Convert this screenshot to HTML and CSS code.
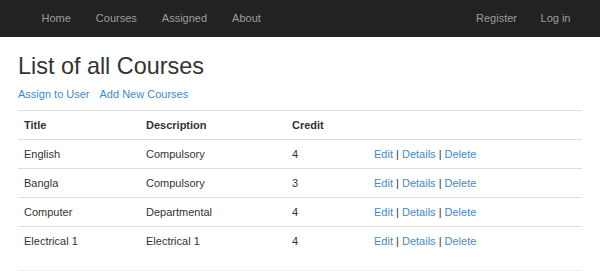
FILE: index.html
```html
<!DOCTYPE html>
<html>
<head>
<meta charset="utf-8">
<title>Courses</title>
<link rel="stylesheet" href="styles.css">
</head>
<body>
<nav class="navbar">
  <ul class="nav nav-left">
    <li><a href="#">Home</a></li>
    <li><a href="#">Courses</a></li>
    <li><a href="#">Assigned</a></li>
    <li><a href="#">About</a></li>
  </ul>
  <ul class="nav nav-right">
    <li><a href="#">Register</a></li>
    <li><a href="#">Log in</a></li>
  </ul>
</nav>
<main class="container">
  <h2 class="title">List of all Courses</h2>
  <p class="actions">
    <a href="#">Assign to User</a>
    <a href="#">Add New Courses</a>
  </p>
  <table class="table">
    <tr>
      <th class="c1">Title</th>
      <th class="c2">Description</th>
      <th class="c3">Credit</th>
      <th></th>
    </tr>
    <tr>
      <td>English</td><td>Compulsory</td><td>4</td>
      <td><a href="#">Edit</a> | <a href="#">Details</a> | <a href="#">Delete</a></td>
    </tr>
    <tr>
      <td>Bangla</td><td>Compulsory</td><td>3</td>
      <td><a href="#">Edit</a> | <a href="#">Details</a> | <a href="#">Delete</a></td>
    </tr>
    <tr>
      <td>Computer</td><td>Departmental</td><td>4</td>
      <td><a href="#">Edit</a> | <a href="#">Details</a> | <a href="#">Delete</a></td>
    </tr>
    <tr>
      <td>Electrical 1</td><td>Electrical 1</td><td>4</td>
      <td><a href="#">Edit</a> | <a href="#">Details</a> | <a href="#">Delete</a></td>
    </tr>
  </table>
  <hr class="rule">
</main>
</body>
</html>
```
FILE: styles.css
```css
html, body {
  margin: 0;
  padding: 0;
  background: #fff;
}
body {
  font-family: "Liberation Sans", Arial, Helvetica, sans-serif;
  font-size: 11px;
  line-height: 16px;
  color: #333;
}
a {
  color: #428bca;
  text-decoration: none;
}
.navbar {
  height: 37px;
  background: #222;
  display: flex;
  justify-content: space-between;
  padding: 0 18px 0 29px;
}
.nav {
  list-style: none;
  margin: 0;
  padding: 0;
  display: flex;
}
.nav a {
  display: block;
  color: #9d9d9d;
  padding: 10px 12.5px 11px;
}
.nav-right a {
  padding: 10px 11.5px 11px 12px;
}
.container {
  padding: 0 18px;
}
.title {
  margin: 16px 0 0;
  font-size: 23.4px;
  font-weight: 500;
  line-height: 26.4px;
}
.actions {
  margin: 7px 0 0;
  display: flex;
  gap: 10px;
}
.table {
  margin-top: 7.5px;
  width: 100%;
  border-collapse: collapse;
  border-spacing: 0;
}
.table th,
.table td {
  padding: 6px;
  text-align: left;
  border-top: 1px solid #ddd;
  vertical-align: top;
}
.table th {
  font-weight: bold;
}
.c1 { width: 110px; }
.c2 { width: 134px; }
.c3 { width: 70px; }
.rule {
  margin: 15px 0 0;
  border: 0;
  border-top: 1px solid #eee;
}
```
